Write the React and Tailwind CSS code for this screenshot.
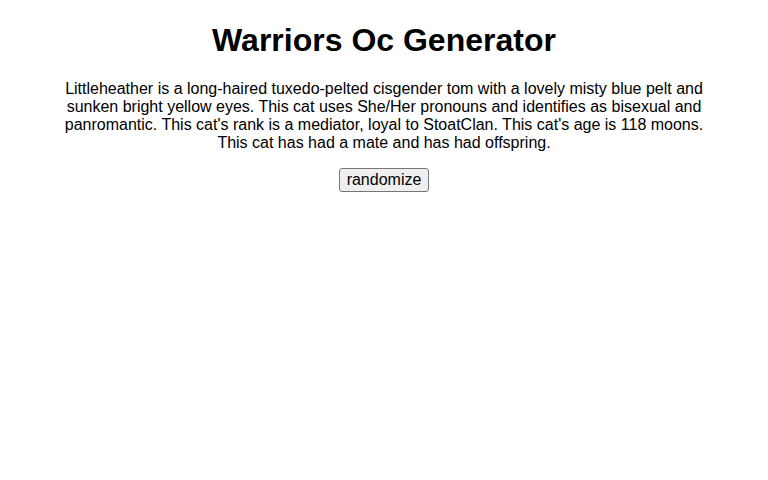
import React, { useState } from 'react';

const cat = {
  name: 'Littleheather',
  hair: 'long-haired',
  pelt: 'tuxedo-pelted',
  gender: 'cisgender tom',
  color: 'lovely misty blue',
  eyes: 'sunken bright yellow',
  pronouns: 'She/Her',
  sexuality: 'bisexual and panromantic',
  rank: 'mediator',
  clan: 'StoatClan',
  age: 118,
};

export default function App() {
  const [oc] = useState(cat);

  return (
    <div className="min-h-screen bg-white text-black px-2 text-center font-['Liberation_Sans',Arial,sans-serif]">
      <h1 className="pt-[22px] text-[32px] font-bold leading-[37px]">Warriors Oc Generator</h1>

      <p className="mx-auto mt-[21px] max-w-[656px] text-base leading-[18px]">
        {oc.name} is a {oc.hair} {oc.pelt} {oc.gender} with a {oc.color} pelt and {oc.eyes} eyes. This cat
        uses {oc.pronouns} pronouns and identifies as {oc.sexuality}. This cat's rank is a {oc.rank}, loyal
        to {oc.clan}. This cat's age is {oc.age} moons. This cat has had a mate and has had offspring.
      </p>

      <button className="mt-4 rounded-[3px] border border-[#767676] bg-[#efefef] px-[7px] py-[2px] text-base leading-[18px] text-black">
        randomize
      </button>
    </div>
  );
}
